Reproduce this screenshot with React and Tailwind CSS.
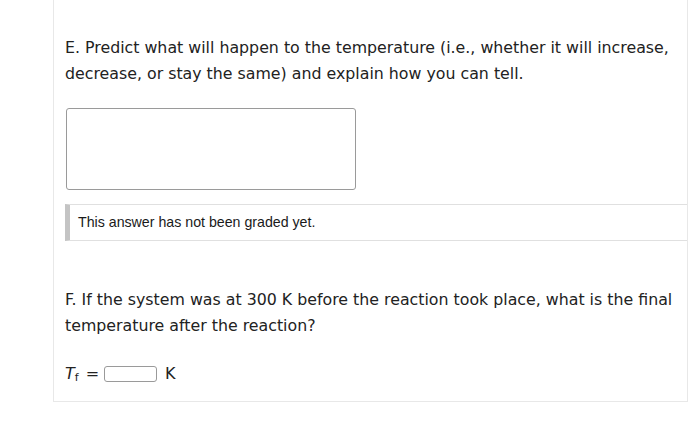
export default function App() {
  return (
    <div className="w-[700px] h-[426px] bg-white overflow-hidden">
      <div
        className="ml-[53px] w-[635px] h-[402px] border-l border-r border-b border-[#e8e8e8] pl-[11px] pt-[35px] text-[#222]"
        style={{ fontFamily: '"DejaVu Sans", Verdana, sans-serif' }}
      >
        {/* Part E */}
        <p className="text-[15.8px] leading-[26px] pr-[4px]">
          E. Predict what will happen to the temperature (i.e., whether it will increase,
          decrease, or stay the same) and explain how you can tell.
        </p>
        <div className="mt-[21px] ml-[1px] w-[290px] h-[82px] border border-[#9a9a9a] rounded-[3px]" />

        <div
          className="mt-[14px] h-[37px] border-t border-b border-[#e0e0e0] border-l-[5px] border-l-[#c4c4c4] flex items-center pl-[8px] text-[14.2px] text-[#1a1a1a]"
          style={{ fontFamily: '"Liberation Sans", Arial, sans-serif' }}
        >
          This answer has not been graded yet.
        </div>

        {/* Part F */}
        <p className="mt-[46px] text-[15.8px] leading-[26px] pr-[2px]">
          F. If the system was at 300 K before the reaction took place, what is the final
          temperature after the reaction?
        </p>
        <div className="mt-[26px] flex items-center h-[18px] text-[16px]">
          <span className="italic">T</span>
          <span className="text-[11px] relative top-[4px]">f</span>
          <span className="ml-[7px]">=</span>
          <div className="ml-[5px] w-[53px] h-[16px] border border-[#9a9a9a] rounded-[3px]" />
          <span className="ml-[8px]">K</span>
        </div>
      </div>
    </div>
  );
}
